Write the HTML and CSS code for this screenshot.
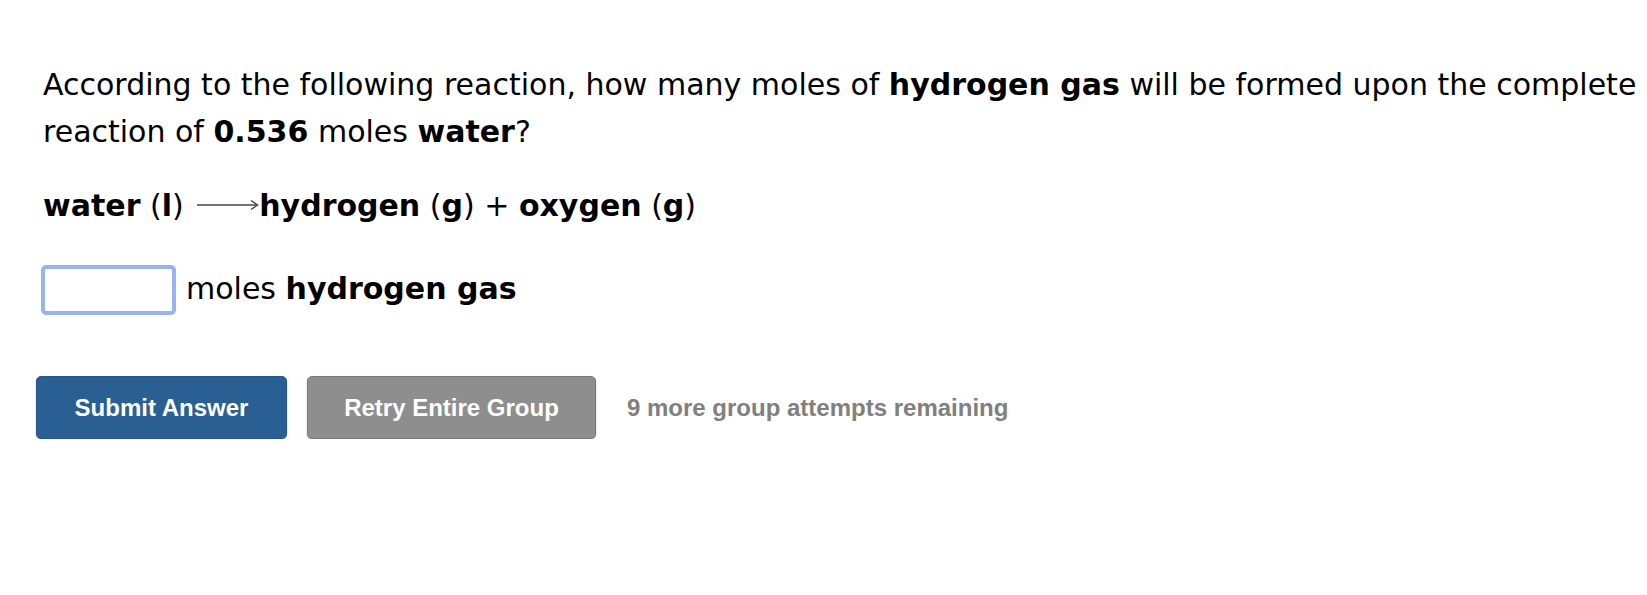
FILE: index.html
```html
<!DOCTYPE html>
<html>
<head>
<meta charset="utf-8">
<link rel="stylesheet" href="styles.css">
</head>
<body>
<div class="question">
  <p class="prompt">According to the following reaction, how many moles of <b>hydrogen gas</b> will be formed upon the complete reaction of <b>0.536</b> moles <b>water</b>?</p>
  <p class="equation"><b>water</b> (<b>l</b>) <svg class="arrow" width="62" height="14" viewBox="0 0 62 14"><line x1="0" y1="7" x2="60" y2="7" stroke="#444" stroke-width="1.5"/><path d="M54 2.5 L60.5 7 L54 11.5" fill="none" stroke="#444" stroke-width="1.5"/></svg><b>hydrogen</b> (<b>g</b>) + <b>oxygen</b> (<b>g</b>)</p>
  <div class="answer-row">
    <input class="answer" type="text">
    <span class="unit">moles <b>hydrogen gas</b></span>
  </div>
  <div class="actions">
    <button class="btn btn-submit">Submit Answer</button>
    <button class="btn btn-retry">Retry Entire Group</button>
    <span class="attempts">9 more group attempts remaining</span>
  </div>
</div>
</body>
</html>
```
FILE: styles.css
```css
html, body {
  margin: 0;
  padding: 0;
  background: #fff;
}
.question {
  padding: 61px 0 0 43px;
  font-family: "DejaVu Sans", Verdana, sans-serif;
  font-size: 30px;
  color: #000;
}
.prompt {
  margin: 0;
  line-height: 47px;
}
.equation {
  margin: 31px 0 0 0;
  line-height: 39px;
}
.arrow {
  vertical-align: 4px;
  margin-left: 4px;
}
.answer-row {
  display: flex;
  align-items: center;
  gap: 10px;
  margin-top: 40px;
  margin-left: -2px;
}
.answer {
  box-sizing: border-box;
  width: 135px;
  height: 50px;
  border: 4px solid #98b4f0;
  border-radius: 5px;
  outline: none;
  background: #fff;
  margin: 0;
}
.unit {
  line-height: 39px;
  margin-bottom: 4px;
}
.actions {
  display: flex;
  align-items: center;
  margin-top: 61px;
  margin-left: -7px;
  font-family: "Liberation Sans", Arial, sans-serif;
}
.btn {
  box-sizing: border-box;
  height: 63px;
  border-radius: 5px;
  font-family: "Liberation Sans", Arial, sans-serif;
  font-weight: bold;
  font-size: 24px;
  color: #fff;
  margin: 0;
  cursor: pointer;
  box-shadow: 0 1px 2px rgba(0,0,0,0.25);
}
.btn-submit {
  width: 251px;
  background: #2a5f93;
  border: 1px solid #25578a;
}
.btn-retry {
  width: 289px;
  margin-left: 20px;
  background: #8e8e8e;
  border: 1px solid #7a7a7a;
}
.attempts {
  margin-left: 31px;
  font-weight: bold;
  font-size: 24px;
  color: #808080;
}
```
